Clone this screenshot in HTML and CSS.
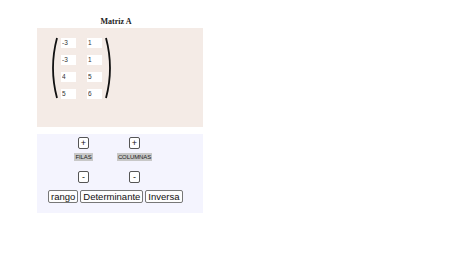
FILE: index.html
```html
<!DOCTYPE html>
<html>
<head>
<meta charset="utf-8">
<link rel="stylesheet" href="styles.css">
</head>
<body>
<div class="page">
  <div class="title">Matriz A</div>
  <div class="panel top">
    <div class="matrix">
      <svg class="paren" width="10" height="62" viewBox="0 0 10 62"><path d="M8 1 Q0 31 8 61" fill="none" stroke="#111" stroke-width="1.8"/></svg>
      <div class="grid">
        <input class="cell" value="-3"><input class="cell" value="1">
        <input class="cell" value="-3"><input class="cell" value="1">
        <input class="cell" value="4"><input class="cell" value="5">
        <input class="cell" value="5"><input class="cell" value="6">
      </div>
      <svg class="paren" width="10" height="62" viewBox="0 0 10 62"><path d="M2 1 Q10 31 2 61" fill="none" stroke="#111" stroke-width="1.8"/></svg>
    </div>
  </div>
  <div class="panel bottom">
    <div class="controls">
      <div class="col">
        <button class="small">+</button>
        <span class="label">FILAS</span>
        <button class="small">-</button>
      </div>
      <div class="col">
        <button class="small">+</button>
        <span class="label">COLUMNAS</span>
        <button class="small">-</button>
      </div>
    </div>
    <div class="actions">
      <button class="act">rango</button><button class="act">Determinante</button><button class="act">Inversa</button>
    </div>
  </div>
</div>
</body>
</html>
```
FILE: styles.css
```css
html, body { margin: 0; padding: 0; background: #fff; }
.page { padding: 17px 0 0 37px; width: 166px; font-family: "Liberation Sans", Arial, sans-serif; }
.title { font-family: "Liberation Serif", "Times New Roman", serif; font-weight: bold; font-size: 8px; line-height: 9px; height: 11px; text-align: center; padding-right: 8px; color: #222; }
.panel { width: 166px; box-sizing: border-box; }
.top { background: #f4ebe6; height: 99px; padding: 9px 0 0 12px; }
.matrix { display: flex; align-items: center; gap: 1px; }
.paren { display: block; }
.grid { display: grid; grid-template-columns: 15px 15px; column-gap: 11px; row-gap: 7px; padding: 0 1px; }
.cell { width: 15px; height: 10px; box-sizing: border-box; border: none; background: #fff; font-family: "Liberation Sans", Arial, sans-serif; font-size: 6.5px; color: #333; padding: 0 1px; margin: 0; outline: none; }
.bottom { background: #f4f4fe; height: 79px; margin-top: 7px; padding-top: 3px; }
.controls { display: flex; padding-left: 28px; gap: 14px; }
.col { display: flex; flex-direction: column; align-items: center; width: 37px; }
.small { width: 11px; height: 12px; padding: 0; font-size: 9px; line-height: 10px; font-family: "Liberation Sans", Arial, sans-serif; background: #fff; border: 1px solid #555; border-radius: 2px; color: #111; }
.label { background: #c8c8c8; font-size: 6px; line-height: 8px; padding: 0 1px; margin: 4px 0 10px; color: #222; letter-spacing: -0.1px; }
.actions { display: flex; gap: 2px; padding: 7px 0 0 11px; }
.act { font-family: "Liberation Sans", Arial, sans-serif; font-size: 9.5px; line-height: 10px; height: 13px; padding: 0 2px; background: #fdfdfd; border: 1px solid #777; border-radius: 2px; color: #111; }
```
